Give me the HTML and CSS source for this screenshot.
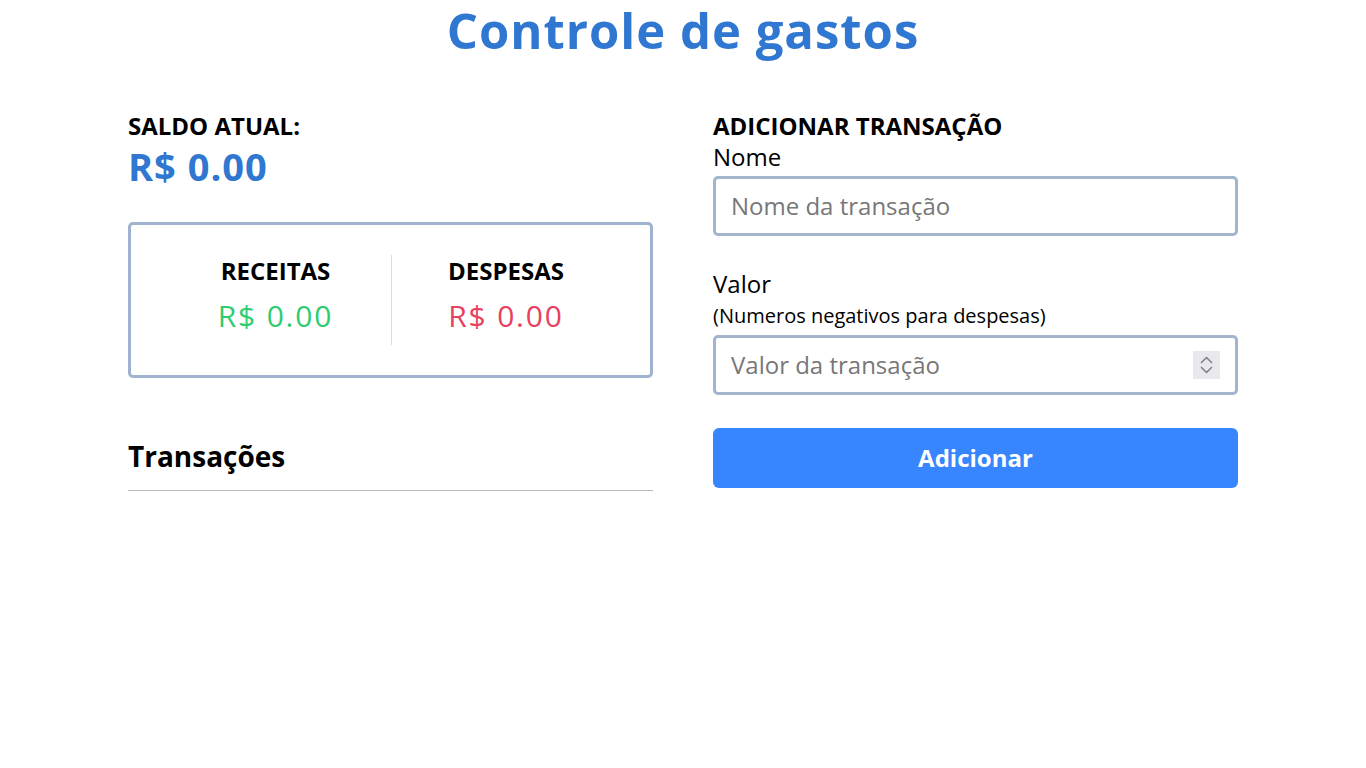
FILE: index.html
```html
<!DOCTYPE html>
<html lang="pt-BR">
<head>
<meta charset="utf-8">
<title>Controle de gastos</title>
<link rel="stylesheet" href="styles.css">
</head>
<body>
<h1 class="title">Controle de gastos</h1>
<main class="container">
  <section class="col">
    <h4 class="label-bold">SALDO ATUAL:</h4>
    <div class="balance">R$ 0.00</div>
    <div class="summary">
      <div class="summary-item">
        <h4 class="label-bold">RECEITAS</h4>
        <p class="money plus">R$ 0.00</p>
      </div>
      <div class="summary-item divided">
        <h4 class="label-bold">DESPESAS</h4>
        <p class="money minus">R$ 0.00</p>
      </div>
    </div>
    <h3 class="list-title">Transações</h3>
    <ul class="list"></ul>
  </section>
  <section class="col">
    <h4 class="label-bold">ADICIONAR TRANSAÇÃO</h4>
    <form class="form">
      <div class="field">
        <label class="label" for="text">Nome</label>
        <input class="input" type="text" id="text" placeholder="Nome da transação">
      </div>
      <div class="field field-gap">
        <label class="label" for="amount">Valor <span class="hint">(Numeros negativos para despesas)</span></label>
        <div class="input-wrap">
          <input class="input input-num" type="number" id="amount" placeholder="Valor da transação">
          <span class="spinner" aria-hidden="true">
            <svg width="27" height="28" viewBox="0 0 27 28">
              <rect width="27" height="28" fill="#e9e9ed"/>
              <path d="M8.5 11.5 L13.5 6.5 L18.5 11.5" fill="none" stroke="#85858d" stroke-width="1.7" stroke-linecap="round" stroke-linejoin="round"/>
              <path d="M8.5 16.5 L13.5 21.5 L18.5 16.5" fill="none" stroke="#85858d" stroke-width="1.7" stroke-linecap="round" stroke-linejoin="round"/>
            </svg>
          </span>
        </div>
      </div>
      <button class="btn" type="button">Adicionar</button>
    </form>
  </section>
</main>
</body>
</html>
```

FILE: styles.css
```css
* { box-sizing: border-box; }

body {
  margin: 0;
  font-family: "Open Sans", "Noto Sans", sans-serif;
  color: #000;
  background: #fff;
}

.title {
  margin: 2px 0 0;
  text-align: center;
  font-size: 49px;
  line-height: 1.15;
  font-weight: 700;
  letter-spacing: 1px;
  color: #2f77d0;
}

.container {
  width: 1110px;
  margin: 52px auto 0;
  display: grid;
  grid-template-columns: 525px 525px;
  column-gap: 60px;
  align-items: start;
}

.col { display: flex; flex-direction: column; }

.label-bold {
  margin: 0;
  font-size: 24px;
  font-weight: 700;
  line-height: 1.362;
}

.balance {
  font-size: 38px;
  font-weight: 700;
  line-height: 46px;
  letter-spacing: 1px;
  color: #2f77d0;
}

.summary {
  margin-top: 33px;
  border: 3px solid #9fb2d0;
  border-radius: 5px;
  padding: 30px 0;
  display: flex;
  justify-content: center;
}

.summary-item {
  width: 230px;
  text-align: center;
  padding-bottom: 8px;
}

.summary-item.divided { border-left: 1px solid #dcdcdc; }

.money {
  margin: 8px 0 0;
  font-size: 30px;
  line-height: 1.362;
  letter-spacing: 1.8px;
}

.plus { color: #2ecc71; }
.minus { color: #e8405e; }

.list-title {
  margin: 59px 0 0;
  font-size: 28px;
  font-weight: 700;
  line-height: 1.362;
  padding-bottom: 15px;
  border-bottom: 1px solid #bbbbbb;
}

.list { margin: 0; padding: 0; list-style: none; }

.form { display: flex; flex-direction: column; }

.field { display: flex; flex-direction: column; }
.field-gap { margin-top: 34px; }

.label {
  display: block;
  font-size: 24px;
  line-height: 1.2;
}

.hint {
  display: block;
  margin-top: 3px;
  font-size: 20px;
  line-height: 1.362;
}

.input {
  display: block;
  width: 100%;
  height: 60px;
  margin-top: 4px;
  padding: 0 15px;
  border: 3px solid #a3b4cf;
  border-radius: 5px;
  font-family: inherit;
  font-size: 24px;
  color: #000;
  background: #fff;
  outline: none;
  -moz-appearance: textfield;
}

.input-num { margin-top: 6px; }

.input::placeholder { color: #777; }

.input::-webkit-outer-spin-button,
.input::-webkit-inner-spin-button { -webkit-appearance: none; margin: 0; }

.input-wrap { position: relative; }

.spinner {
  position: absolute;
  right: 18px;
  top: 22px;
  width: 27px;
  height: 28px;
  display: block;
}

.spinner svg { display: block; }

.btn {
  margin-top: 33px;
  height: 60px;
  border: none;
  border-radius: 6px;
  background: #3785ff;
  color: #fff;
  font-family: inherit;
  font-size: 24px;
  font-weight: 700;
  cursor: pointer;
}
```
